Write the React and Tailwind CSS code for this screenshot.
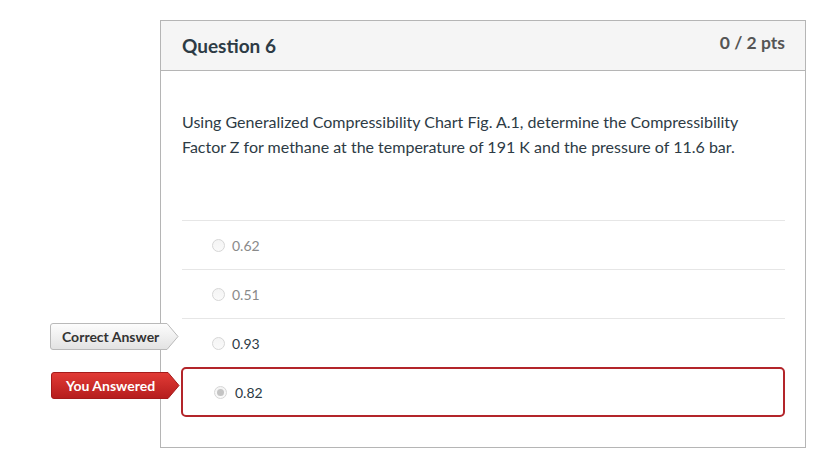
import React from "react";

function Radio({ checked }) {
  return (
    <span className="relative inline-flex items-center justify-center w-[13px] h-[13px] rounded-full border border-[#d6d6d6] bg-gradient-to-b from-[#f4f4f4] to-[#fafafa]">
      {checked && <span className="w-[7px] h-[7px] rounded-full bg-[#c4c4c4]" />}
    </span>
  );
}

function Label({ text, red }) {
  return (
    <div className={`absolute left-[-132px] ${red ? "top-[3px]" : "top-[4px]"} w-[129px] h-[27px] flex items-center`}>
      <svg className="absolute inset-0" width="129" height="27" viewBox="0 0 129 27">
        <defs>
          <linearGradient id={red ? "gr" : "gg"} x1="0" y1="0" x2="0" y2="1">
            {red ? (
              <>
                <stop offset="0" stopColor="#e23b36" />
                <stop offset="1" stopColor="#b51d1d" />
              </>
            ) : (
              <>
                <stop offset="0" stopColor="#fdfdfd" />
                <stop offset="1" stopColor="#e2e2e2" />
              </>
            )}
          </linearGradient>
        </defs>
        <path
          d="M3 0.5 H117 L128 13.5 L117 26.5 H3 Q0.5 26.5 0.5 24 V3 Q0.5 0.5 3 0.5 Z"
          fill={`url(#${red ? "gr" : "gg"})`}
          stroke={red ? "#a51b1b" : "#b9b9b9"}
          strokeWidth="1"
        />
      </svg>
      <span
        className={`relative text-[14px] font-bold ${red ? "text-white" : "text-[#333]"}`}
        style={{ paddingLeft: red ? 15 : 12 }}
      >
        {text}
      </span>
    </div>
  );
}

export default function App() {
  return (
    <div
      className="w-[836px] h-[468px] bg-white pl-[160px] pt-[20px]"
      style={{ fontFamily: "Lato, 'Open Sans', sans-serif" }}
    >
      <div className="w-[646px] h-[428px] border border-[#b5b5b5] bg-white">
        <div className="h-[50px] bg-[#f5f5f5] border-b border-[#b5b5b5] flex items-center justify-between pl-[21px] pr-[20px]">
          <span className="text-[19px] font-bold text-[#2d3b45] mt-[1px]">Question 6</span>
          <span className="text-[17.5px] font-bold text-[#555] self-start mt-[9px]">0 / 2 pts</span>
        </div>
        <div className="px-[21px]">
          <p className="pt-[38px] text-[16px] leading-[25px] text-[#2d3b45]">
            Using Generalized Compressibility Chart Fig. A.1, determine the Compressibility
            <br />
            Factor Z for methane at the temperature of 191 K and the pressure of 11.6 bar.
          </p>
          <div className="mt-[61px] w-[603px]">
            <div className="h-[49px] border-t border-[#e6e6e6] flex items-center pl-[30px] gap-[7px]">
              <Radio />
              <span className="text-[14px] text-[#8a8a8a]">0.62</span>
            </div>
            <div className="h-[49px] border-t border-[#e6e6e6] flex items-center pl-[30px] gap-[7px]">
              <Radio />
              <span className="text-[14px] text-[#8a8a8a]">0.51</span>
            </div>
            <div className="relative h-[49px] border-t border-[#e6e6e6] flex items-center pl-[30px] gap-[7px]">
              <Label text="Correct Answer" />
              <Radio />
              <span className="text-[14px] text-[#2d3b45]">0.93</span>
            </div>
            <div className="relative h-[50px] ml-[-1px] border-2 border-[#b3252a] rounded-[5px] flex items-center pl-[31px] gap-[8px]">
              <Label text="You Answered" red />
              <Radio checked />
              <span className="text-[14px] text-[#2d3b45]">0.82</span>
            </div>
          </div>
        </div>
      </div>
    </div>
  );
}
